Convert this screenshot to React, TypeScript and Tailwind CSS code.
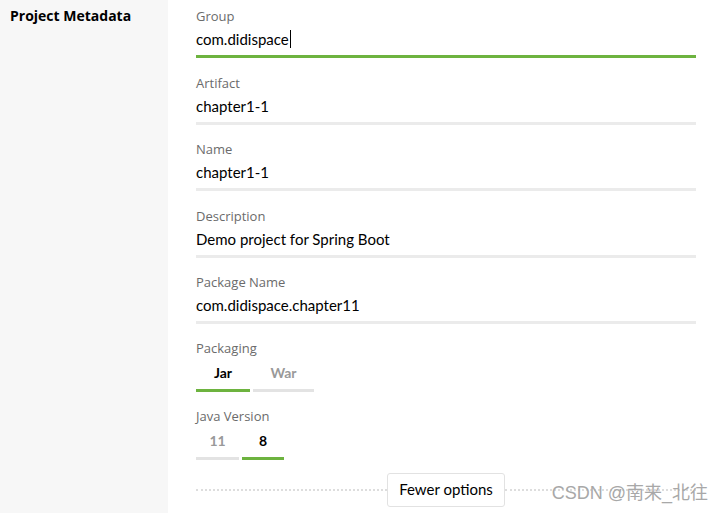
import React from 'react';

const fields = [
  { label: 'Group', value: 'com.didispace', active: true },
  { label: 'Artifact', value: 'chapter1-1' },
  { label: 'Name', value: 'chapter1-1' },
  { label: 'Description', value: 'Demo project for Spring Boot' },
  { label: 'Package Name', value: 'com.didispace.chapter11' },
];

const labelFont = { fontFamily: '"Open Sans", "Noto Sans", sans-serif' };

function Field({ label, value, active }: { label: string; value: string; active?: boolean }) {
  return (
    <div className="mb-[16.5px]">
      <div className="text-[13px] leading-[16px] text-[#6b6b6b]" style={labelFont}>
        {label}
      </div>
      <div className="mt-[4px] flex items-center text-[15px] leading-[22px] text-black">
        {value}
        {active && <span className="ml-[1px] inline-block h-[18px] w-[1px] bg-black" />}
      </div>
      <div className={`mt-[5px] h-[3px] ${active ? 'bg-[#6db33f]' : 'bg-[#ebebeb]'}`} />
    </div>
  );
}

function Radio({ label, options, selected }: { label: string; options: { name: string; w: string }[]; selected: string }) {
  return (
    <div className="mb-[16px]">
      <div className="text-[13px] leading-[16px] text-[#6b6b6b]" style={labelFont}>
        {label}
      </div>
      <div className="mt-[7px] flex gap-[3px]">
        {options.map((o) => (
          <div key={o.name} className={`${o.w} flex flex-col`}>
            <span
              className={`text-center text-[14px] font-bold leading-[20px] ${
                o.name === selected ? 'text-black' : 'text-[#999]'
              }`}
            >
              {o.name}
            </span>
            <div className={`mt-[6px] h-[3px] ${o.name === selected ? 'bg-[#6db33f]' : 'bg-[#e3e3e3]'}`} />
          </div>
        ))}
      </div>
    </div>
  );
}

export default function App() {
  return (
    <div
      className="relative flex h-[513px] w-full overflow-hidden bg-white"
      style={{ fontFamily: '"Lato", "Noto Sans", sans-serif' }}
    >
      {/* sidebar */}
      <div className="w-[168px] shrink-0 bg-[#f7f7f7] pl-[10px] pt-[7px]">
        <div className="text-[14px] font-bold leading-[18px] text-black" style={labelFont}>
          Project Metadata
        </div>
      </div>

      {/* form */}
      <div className="w-[528px] pl-[28px] pt-[8px]">
        {fields.map((f) => (
          <Field key={f.label} {...f} />
        ))}
        <div className="-mt-[1px]">
          <Radio
            label="Packaging"
            selected="Jar"
            options={[
              { name: 'Jar', w: 'w-[54px]' },
              { name: 'War', w: 'w-[61px]' },
            ]}
          />
          <Radio
            label="Java Version"
            selected="8"
            options={[
              { name: '11', w: 'w-[43px]' },
              { name: '8', w: 'w-[42px]' },
            ]}
          />
        </div>
        <div className="mt-[-3px] flex items-center">
          <div className="h-[2px] flex-1 border-t-2 border-dotted border-[#dddddd]" />
          <button className="h-[34px] rounded-[3px] border border-[#e2e2e2] bg-white px-[11px] text-[15px] text-black">
            Fewer options
          </button>
          <div className="h-[2px] flex-1 border-t-2 border-dotted border-[#dddddd]" />
        </div>
      </div>

      {/* watermark */}
      <div
        className="absolute bottom-[6px] right-[16px] text-[18px] text-[#a8a8a8]"
        style={{ fontFamily: '"Liberation Sans", "Noto Sans CJK SC", sans-serif' }}
      >
        CSDN @南来_北往
      </div>
    </div>
  );
}
